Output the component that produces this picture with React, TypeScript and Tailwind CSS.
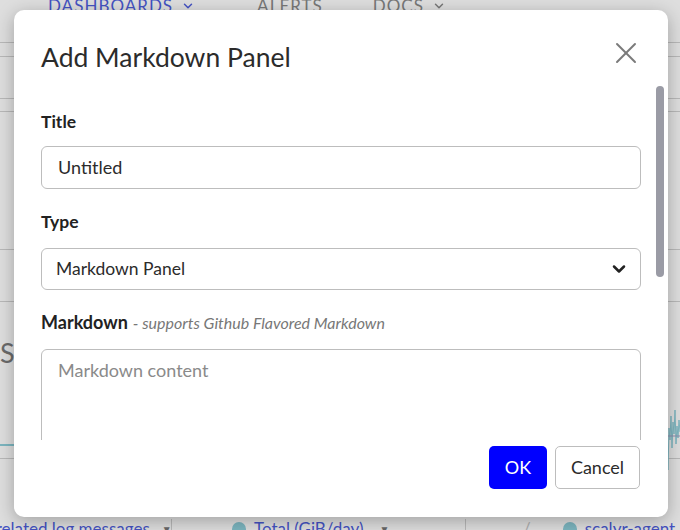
import { X, ChevronDown } from 'lucide-react'

function BackgroundPage() {
  return (
    <div className="flex h-full flex-col">
      {/* top nav, mostly scrolled off */}
      <div className="-mt-[12px] flex h-[36px] shrink-0 items-center pl-[48px] text-[17px] tracking-[0.06em]">
        <span className="flex items-center gap-2 text-[#4f5fe0]">
          DASHBOARDS <ChevronDown size={14} strokeWidth={2.5} />
        </span>
        <span className="ml-[62px] text-[#8a8a8a]">ALERTS</span>
        <span className="ml-[50px] flex items-center gap-2 text-[#8a8a8a]">
          DOCS <ChevronDown size={14} strokeWidth={2.5} />
        </span>
      </div>
      <div className="h-[19px] shrink-0 border-b border-[#d4d4d4]" />
      <div className="h-[14px] shrink-0 border-b border-[#d4d4d4]" />
      <div className="h-[42px] shrink-0 border-b border-[#d4d4d4]" />
      <div className="h-[13px] shrink-0 border-b border-[#d4d4d4]" />
      <div className="h-[138px] shrink-0 border-b border-[#d4d4d4]" />
      <div className="h-[52px] shrink-0 border-b border-[#d4d4d4]" />

      {/* section with chart */}
      <div className="flex h-[157px] shrink-0 flex-col border-b border-[#d4d4d4]">
        <div className="mt-[36px] whitespace-nowrap text-[27px] leading-[30px] text-[#7a7a7a]">Spend Overview</div>
        <div className="mt-[36px] flex items-end justify-between">
          <div className="mb-[30px] h-[2px] w-[40px] bg-[#8fd0dc]" />
          <svg width="20" height="70" viewBox="0 0 20 70" className="mb-[2px]">
            <polyline
              points="0,30 1,10 2,40 3,14 4,34 5,8 6,50 7,20 8,66 9,24 10,36 11,12 12,44 13,18 14,30 15,6 16,40 17,22 18,34 19,16 20,28"
              fill="none"
              stroke="#8fd0dc"
              strokeWidth="1"
            />
            <line x1="0" y1="32" x2="20" y2="32" stroke="#a3a3c8" strokeWidth="1" />
          </svg>
        </div>
      </div>

      {/* legend row */}
      <div className="flex h-[70px] shrink-0 items-start whitespace-nowrap pt-[60px] text-[17px] leading-[20px] text-[#4f5fe0]">
        <div className="-ml-[26px] flex w-[198px] shrink-0 items-center gap-3 border-r border-[#d4d4d4]">
          <span>Unrelated log messages</span>
          <span className="text-[10px] text-[#777]">▼</span>
        </div>
        <div className="w-[28px] shrink-0 border-r border-[#d4d4d4]" />
        <div className="flex w-[266px] shrink-0 items-center gap-2 border-r border-[#d4d4d4] pl-[32px]">
          <span className="h-[14px] w-[14px] rounded-full bg-[#8fd0dc]" />
          <span>Total (GiB/day)</span>
          <span className="ml-2 text-[10px] text-[#777]">▼</span>
        </div>
        <div className="w-[27px] shrink-0 border-r border-[#d4d4d4]" />
        <div className="flex shrink-0 items-center gap-2 pl-[30px]">
          <span className="mr-[24px] text-[#c8c8c8]">/</span>
          <span className="h-[14px] w-[14px] rounded-full bg-[#8fd0dc]" />
          <span>scalyr-agent</span>
          <span className="ml-2 text-[10px] text-[#777]">▼</span>
        </div>
      </div>
    </div>
  )
}

export default function App() {
  return (
    <div className="relative h-[530px] w-[680px] overflow-hidden bg-white font-['Lato',sans-serif]">
      <BackgroundPage />

      {/* dimmed backdrop */}
      <div className="absolute inset-0 bg-black/[0.13]" />

      {/* modal */}
      <div className="absolute left-[14px] top-[10px] flex h-[507px] w-[654px] flex-col rounded-[10px] bg-white shadow-[0_4px_18px_rgba(0,0,0,0.28)]">
        <div className="flex h-[70px] shrink-0 items-start justify-between pl-[27px] pr-[24px] pt-[31px]">
          <h2 className="text-[26.5px] leading-[32px] text-[#2b2b2b]">Add Markdown Panel</h2>
          <button className="-mt-[6px] text-[#7a7a7a]">
            <X size={36} strokeWidth={1.3} />
          </button>
        </div>

        <div className="relative h-[360px] shrink-0 overflow-hidden">
          <div className="px-[27px] pt-[32px]">
            <label className="block text-[17.5px] font-bold leading-[20px] text-[#222]">Title</label>
            <div className="mt-[14px] flex h-[43px] items-center rounded-[6px] border border-[#bdbdbd] pl-[16px] text-[18px] text-[#2b2b2b]">
              Untitled
            </div>

            <label className="mt-[23px] block text-[17.5px] font-bold leading-[20px] text-[#222]">Type</label>
            <div className="mt-[16px] flex h-[42px] items-center justify-between rounded-[6px] border border-[#bdbdbd] pl-[14px] pr-[11px] text-[17.5px] text-[#2b2b2b]">
              <span>Markdown Panel</span>
              <ChevronDown size={20} strokeWidth={3} className="text-[#222]" />
            </div>

            <div className="mt-[22px] flex items-baseline gap-[5px] leading-[20px]">
              <span className="text-[18px] font-bold text-[#222]">Markdown</span>
              <span className="text-[16px] italic text-[#777]">- supports Github Flavored Markdown</span>
            </div>
            <div className="mt-[16px] h-[160px] rounded-[6px] border border-[#bdbdbd] pl-[16px] pt-[7px] text-[18px] text-[#8a8a8a]">
              Markdown content
            </div>
          </div>

          {/* scrollbar thumb */}
          <div className="absolute right-[4px] top-[6px] h-[191px] w-[8px] rounded-full bg-[#9a9ba5]" />
        </div>

        <div className="flex justify-end gap-[8px] pr-[28px] pt-[6px]">
          <button className="h-[43px] w-[58px] rounded-[5px] bg-[#0000ff] text-[18px] text-white">OK</button>
          <button className="h-[43px] w-[85px] rounded-[5px] border border-[#bdbdbd] bg-white text-[18px] text-[#2b2b2b]">
            Cancel
          </button>
        </div>
      </div>
    </div>
  )
}
